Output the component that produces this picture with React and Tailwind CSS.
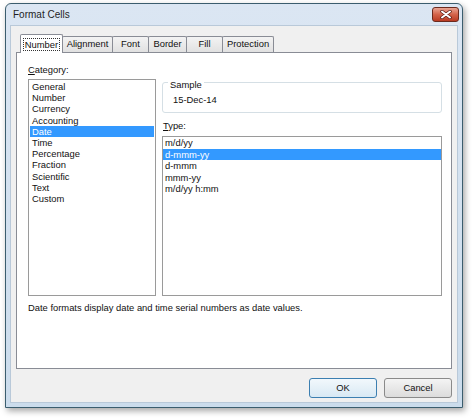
const categories = ['General', 'Number', 'Currency', 'Accounting', 'Date', 'Time', 'Percentage', 'Fraction', 'Scientific', 'Text', 'Custom'];
const types = ['m/d/yy', 'd-mmm-yy', 'd-mmm', 'mmm-yy', 'm/d/yy h:mm'];
const tabs = [
  { label: 'Alignment', w: 'w-[51px]' },
  { label: 'Font', w: 'w-[37px]' },
  { label: 'Border', w: 'w-[39px]' },
  { label: 'Fill', w: 'w-[37px]' },
  { label: 'Protection', w: 'w-[52px]' },
];

function CloseButton() {
  return (
    <div className="w-[27px] h-[15px] rounded-[3px] border border-[#6b2a1e] bg-gradient-to-b from-[#e9a493] via-[#d3634a] to-[#b93a22] flex items-center justify-center">
      <svg width="12" height="9" viewBox="0 0 12 9">
        <path d="M2 1.5 L10 7.5 M10 1.5 L2 7.5" stroke="#5a1a10" strokeWidth="3.4" strokeLinecap="round" />
        <path d="M2 1.5 L10 7.5 M10 1.5 L2 7.5" stroke="#ffffff" strokeWidth="2" strokeLinecap="round" />
      </svg>
    </div>
  );
}

function Button({ children, isDefault }) {
  return (
    <div
      className={
        isDefault
          ? 'w-[68px] h-[20px] rounded-[3px] border border-[#3c7fb1] bg-gradient-to-b from-[#f2f8fc] to-[#d8e9f4] flex items-center justify-center'
          : 'w-[68px] h-[20px] rounded-[3px] border border-[#8a8a8a] bg-gradient-to-b from-[#f4f4f4] to-[#dcdcdc] flex items-center justify-center'
      }
    >
      {children}
    </div>
  );
}

export default function App() {
  return (
    <div
      className="w-[474px] h-[420px] bg-white pt-[3px] pl-[5px] text-[9.4px] text-[#111]"
      style={{ fontFamily: '"Liberation Sans", Arial, sans-serif' }}
    >
      <div className="w-[458px] h-[405px] border border-[#3b5d6e] rounded-t-[6px] bg-gradient-to-b from-[#dbe6f3] to-[#cbdcec] shadow-[2px_3px_6px_rgba(0,0,0,0.35)] flex flex-col px-[4px] pb-[4px]">
        {/* Title bar */}
        <div className="h-[21px] flex items-center justify-between pl-[3px]">
          <span className="text-[10px] text-[#1e1e1e]">Format Cells</span>
          <div className="-mr-[1px] -mt-[1px]">
            <CloseButton />
          </div>
        </div>

        {/* Client area */}
        <div className="flex-1 bg-[#f0f0f0] border border-[#b9c9d9] px-[5px] pt-[8px] flex flex-col">
          <div className="flex items-end h-[18px] pl-[4px]">
            <div className="relative z-10 -mb-px h-[19px] w-[43px] bg-white border border-b-0 border-[#898c95] rounded-t-[2px] flex items-center justify-center">
              <span className="border border-dotted border-[#333] px-[1px] leading-[11px]">Number</span>
            </div>
            {tabs.map((t) => (
              <div
                key={t.label}
                className={`${t.w} -ml-px h-[16px] border border-b-0 border-[#898c95] rounded-t-[2px] bg-gradient-to-b from-[#f3f3f3] to-[#e1e1e1] flex items-center justify-center`}
              >
                {t.label}
              </div>
            ))}
          </div>

          {/* Tab panel */}
          <div className="h-[317px] border border-[#898c95] bg-white pl-[11px] pt-[11px]">
            <div className="flex">
              <div className="w-[128px]">
                <div className="h-[12px] leading-[12px] mb-[3px]">
                  <span className="underline">C</span>ategory:
                </div>
                <div className="h-[217px] border border-[#9a9a9a] p-[1px]">
                  {categories.map((c) => (
                    <div
                      key={c}
                      className={
                        c === 'Date'
                          ? 'leading-[11.2px] pl-[2px] bg-[#3399ff] text-white'
                          : 'leading-[11.2px] pl-[2px]'
                      }
                    >
                      {c}
                    </div>
                  ))}
                </div>
              </div>

              <div className="w-[280px] ml-[6px]">
                <div className="relative mt-[18px] h-[31px] border border-[#d5dfe5] rounded-[3px] pl-[10px] pt-[11px]">
                  <span className="absolute -top-[4px] left-[5px] bg-white px-[2px] leading-[11px]">Sample</span>
                  <div className="leading-[12px]">15-Dec-14</div>
                </div>
                <div className="h-[12px] leading-[12px] mt-[7px] mb-[4px] pl-px">
                  <span className="underline">T</span>ype:
                </div>
                <div className="h-[160px] border border-[#9a9a9a]">
                  {types.map((t) => (
                    <div
                      key={t}
                      className={
                        t === 'd-mmm-yy'
                          ? 'leading-[11.5px] pl-[2px] bg-[#3399ff] text-white'
                          : 'leading-[11.5px] pl-[2px]'
                      }
                    >
                      {t}
                    </div>
                  ))}
                </div>
              </div>
            </div>
            <div className="mt-[6px] leading-[12px]">
              Date formats display date and time serial numbers as date values.
            </div>
          </div>

          <div className="flex justify-end gap-[7px] mt-[9px]">
            <Button isDefault>OK</Button>
            <Button>Cancel</Button>
          </div>
        </div>
      </div>
    </div>
  );
}
